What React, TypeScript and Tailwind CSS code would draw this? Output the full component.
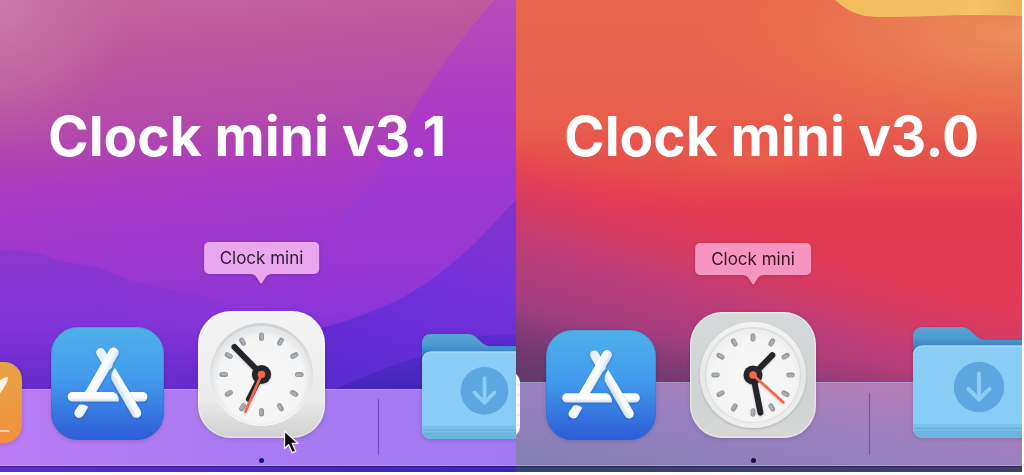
import React from 'react';

interface IconProps {
  id: string;
  className?: string;
}

interface Point {
  x: number;
  y: number;
}

interface ClockIconProps extends IconProps {
  variant: 'recessed' | 'ringed';
  hour: Point;
  minute: Point;
  second: Point;
}

const TICKS = [0, 30, 60, 90, 120, 150, 180, 210, 240, 270, 300, 330];

const MontereyWallpaper: React.FC = () => (
  <svg className="absolute inset-0 -z-10 w-full h-full" viewBox="0 0 516 472" preserveAspectRatio="none" aria-hidden="true">
    <defs>
      <linearGradient id="mon-base" x1="0" y1="0" x2="0.1" y2="1">
        <stop offset="0" stopColor="#c5649c" />
        <stop offset="0.16" stopColor="#bc559f" />
        <stop offset="0.3" stopColor="#b249ab" />
        <stop offset="0.4" stopColor="#ab3bc0" />
        <stop offset="0.48" stopColor="#a438cb" />
        <stop offset="0.6" stopColor="#9b38d1" />
        <stop offset="0.72" stopColor="#8635d8" />
        <stop offset="0.82" stopColor="#6c2dd0" />
        <stop offset="1" stopColor="#4b27b8" />
      </linearGradient>
      <linearGradient id="mon-ridge" x1="0" y1="0" x2="0" y2="1">
        <stop offset="0" stopColor="#b84cb9" />
        <stop offset="0.3" stopColor="#ac39c5" />
        <stop offset="0.5" stopColor="#9d38d2" />
        <stop offset="0.68" stopColor="#9638d6" stopOpacity="0.5" />
        <stop offset="0.85" stopColor="#9536d5" stopOpacity="0" />
      </linearGradient>
      <linearGradient id="mon-left" x1="0" y1="0" x2="0" y2="1">
        <stop offset="0" stopColor="#8d38cf" />
        <stop offset="0.35" stopColor="#8033d8" />
        <stop offset="0.6" stopColor="#682ccb" />
        <stop offset="1" stopColor="#5c29b8" />
      </linearGradient>
      <linearGradient id="mon-left-fade" x1="0" y1="0" x2="1" y2="0">
        <stop offset="0" stopColor="#fff" />
        <stop offset="0.3" stopColor="#fff" />
        <stop offset="0.85" stopColor="#000" />
      </linearGradient>
      <linearGradient id="mon-right" x1="0.9" y1="0" x2="0.5" y2="1">
        <stop offset="0" stopColor="#8333cd" />
        <stop offset="0.45" stopColor="#7431da" />
        <stop offset="1" stopColor="#5a2bd0" />
      </linearGradient>
      <linearGradient id="mon-low" x1="0" y1="0" x2="0" y2="1">
        <stop offset="0" stopColor="#5b2cd2" />
        <stop offset="1" stopColor="#4427b8" />
      </linearGradient>
      <radialGradient id="mon-corner">
        <stop offset="0" stopColor="#c87aaa" />
        <stop offset="1" stopColor="#c6709f" stopOpacity="0" />
      </radialGradient>
      <mask id="mon-mask">
        <rect width="330" height="472" fill="url(#mon-left-fade)" />
      </mask>
    </defs>
    <rect width="516" height="472" fill="url(#mon-base)" />
    <ellipse cx="0" cy="0" rx="130" ry="150" fill="url(#mon-corner)" />
    <path d="M494 0C462 38 430 80 411 114C388 156 350 205 320 260C300 300 280 350 250 400H516V0Z" fill="url(#mon-ridge)" />
    <path d="M0 250C22 248 38 252 60 261C80 265 95 264 112 273C135 284 160 288 200 295C240 305 290 340 330 389V472H0Z" fill="url(#mon-left)" mask="url(#mon-mask)" />
    <path d="M516 200C500 216 490 228 476 242C440 276 410 296 380 308C355 319 335 324 315 330L270 389H516Z" fill="url(#mon-right)" />
    <path d="M516 335C480 334 450 338 424 355C395 364 365 376 335 389H516Z" fill="url(#mon-low)" />
  </svg>
);

const BigSurWallpaper: React.FC = () => (
  <svg className="absolute inset-0 -z-10 w-full h-full" viewBox="0 0 506 472" preserveAspectRatio="none" aria-hidden="true">
    <defs>
      <linearGradient id="sur-base" x1="0" y1="0" x2="0" y2="1">
        <stop offset="0" stopColor="#e9664e" />
        <stop offset="0.24" stopColor="#e8604d" />
        <stop offset="0.34" stopColor="#e6504c" />
        <stop offset="0.45" stopColor="#e53a50" />
        <stop offset="0.65" stopColor="#e23a54" />
        <stop offset="1" stopColor="#d0395c" />
      </linearGradient>
      <linearGradient id="sur-plum" gradientUnits="userSpaceOnUse" x1="0" y1="145" x2="-64" y2="370">
        <stop offset="0" stopColor="#e43b56" stopOpacity="0" />
        <stop offset="0.14" stopColor="#dc3c5e" stopOpacity="0.7" />
        <stop offset="0.38" stopColor="#c13d76" />
        <stop offset="0.62" stopColor="#a43d80" />
        <stop offset="0.85" stopColor="#7f3a75" />
        <stop offset="1" stopColor="#673a6a" />
      </linearGradient>
      <linearGradient id="sur-dusk" gradientUnits="userSpaceOnUse" x1="0" y1="310" x2="-12" y2="390">
        <stop offset="0" stopColor="#5a3a68" stopOpacity="0" />
        <stop offset="1" stopColor="#5a3868" stopOpacity="0.75" />
      </linearGradient>
      <radialGradient id="sur-glow">
        <stop offset="0" stopColor="#eb905a" />
        <stop offset="1" stopColor="#ea7850" stopOpacity="0" />
      </radialGradient>
      <radialGradient id="sur-warm">
        <stop offset="0" stopColor="#e9604d" stopOpacity="0.85" />
        <stop offset="1" stopColor="#e8524c" stopOpacity="0" />
      </radialGradient>
      <linearGradient id="sur-gold" x1="0" y1="0" x2="1" y2="0">
        <stop offset="0.6" stopColor="#f1bd5e" />
        <stop offset="0.75" stopColor="#f3c466" />
        <stop offset="1" stopColor="#eeb154" />
      </linearGradient>
    </defs>
    <rect width="506" height="472" fill="url(#sur-base)" />
    <rect width="506" height="472" fill="url(#sur-plum)" />
    <rect width="506" height="472" fill="url(#sur-dusk)" />
    <ellipse cx="240" cy="155" rx="150" ry="42" fill="url(#sur-warm)" />
    <ellipse cx="506" cy="35" rx="330" ry="110" fill="url(#sur-glow)" />
    <path d="M319 0C332 11 342 17 365 17C410 17 455 13 506 16V0Z" fill="url(#sur-gold)" />
  </svg>
);

const AppStoreIcon: React.FC<IconProps> = ({ id, className }) => (
  <svg className={className} viewBox="0 0 113 113" aria-hidden="true">
    <defs>
      <linearGradient id={`${id}-bg`} x1="0" y1="0" x2="0" y2="1">
        <stop offset="0" stopColor="#4fb0ea" />
        <stop offset="0.45" stopColor="#429bec" />
        <stop offset="1" stopColor="#2d5dd7" />
      </linearGradient>
      <linearGradient id={`${id}-bar`} gradientUnits="userSpaceOnUse" x1="0" y1="65" x2="0" y2="75">
        <stop offset="0" stopColor="#fff" />
        <stop offset="0.6" stopColor="#f8fafd" />
        <stop offset="1" stopColor="#ccd9ec" />
      </linearGradient>
      <linearGradient id={`${id}-a`} gradientUnits="userSpaceOnUse" x1="46" y1="43" x2="56" y2="48">
        <stop offset="0" stopColor="#fff" />
        <stop offset="0.6" stopColor="#f8fafd" />
        <stop offset="1" stopColor="#d6e3f2" />
      </linearGradient>
      <linearGradient id={`${id}-b`} gradientUnits="userSpaceOnUse" x1="80" y1="63" x2="71" y2="68">
        <stop offset="0" stopColor="#fff" />
        <stop offset="0.6" stopColor="#f8fafd" />
        <stop offset="1" stopColor="#d8e5f4" />
      </linearGradient>
      <filter id={`${id}-sh`} x="-20%" y="-20%" width="140%" height="140%">
        <feDropShadow dx="0" dy="1" stdDeviation="1.3" floodColor="#123a8c" floodOpacity="0.4" />
      </filter>
    </defs>
    <rect width="113" height="113" rx="27" fill={`url(#${id}-bg)`} />
    <rect x="0.5" y="0.5" width="112" height="112" rx="26.5" fill="none" stroke="#2b62b4" strokeOpacity="0.25" />
    <g filter={`url(#${id}-sh)`}>
      <path d="M49.7 25.5L57 38" stroke="#e9f2fb" strokeWidth="9" strokeLinecap="round" />
      <path d="M64 41L68.6 48.5L89.5 83.5A4.8 4.8 0 0 1 81.2 88.5L61 53.5C59.2 49.5 61 44.5 64 41Z" fill={`url(#${id}-b)`} />
      <path d="M58.4 23A4.9 4.9 0 0 1 67 28L45 65.6H33.8Z" fill={`url(#${id}-a)`} />
      <path d="M21.5 64.9H62.5C66 66.5 68.2 70 67.7 74.6H21.5A4.8 4.8 0 0 1 21.5 64.9Z" fill={`url(#${id}-bar)`} />
      <path d="M78.4 64.9H91.5A4.8 4.8 0 0 1 91.5 74.6H84.2Z" fill={`url(#${id}-bar)`} />
      <path d="M28.2 77.8C31.5 76.8 35 77.7 37.2 80L32.2 88.6A4.8 4.8 0 0 1 23.9 83.8Z" fill="#f1f5fa" />
    </g>
  </svg>
);

const ClockIcon: React.FC<ClockIconProps> = ({ id, className, variant, hour, minute, second }) => (
  <svg className={className} viewBox="0 0 127 127" aria-hidden="true">
    <defs>
      <linearGradient id={`${id}-body`} x1="0" y1="0" x2="0" y2="1">
        <stop offset="0" stopColor={variant === 'recessed' ? '#f4f4f4' : '#d6d9d9'} />
        <stop offset="0.7" stopColor={variant === 'recessed' ? '#ebebeb' : '#d0d3d3'} />
        <stop offset="1" stopColor={variant === 'recessed' ? '#cfcfd1' : '#d7d8d8'} />
      </linearGradient>
      <linearGradient id={`${id}-rim`} x1="0" y1="0" x2="0" y2="1">
        <stop offset="0" stopColor={variant === 'recessed' ? '#cfd2d5' : '#f3f3f3'} />
        <stop offset="0.5" stopColor={variant === 'recessed' ? '#e1e2e3' : '#e7e8e8'} />
        <stop offset="1" stopColor={variant === 'recessed' ? '#fbfbfb' : '#efefef'} />
      </linearGradient>
      <radialGradient id={`${id}-face`} cx="0.5" cy="0.54" r="0.5">
        <stop offset="0" stopColor="#f8f8f8" />
        <stop offset="0.86" stopColor="#f5f5f5" />
        <stop offset="1" stopColor={variant === 'recessed' ? '#e4e6e8' : '#efefef'} />
      </radialGradient>
      <filter id={`${id}-soft`} x="-20%" y="-20%" width="140%" height="140%">
        <feDropShadow dx="0" dy="1" stdDeviation="1.2" floodColor="#000" floodOpacity="0.2" />
      </filter>
    </defs>
    <rect width="127" height="127" rx="33" fill={`url(#${id}-body)`} />
    <rect x="0.7" y="0.7" width="125.6" height="125.6" rx="32.3" fill="none" stroke="#fff" strokeOpacity="0.4" strokeWidth="1.4" />
    {variant === 'recessed' ? (
      <>
        <circle cx="63.5" cy="63.5" r="51.5" fill={`url(#${id}-rim)`} />
        <circle cx="63.5" cy="64.5" r="49.5" fill={`url(#${id}-face)`} />
      </>
    ) : (
      <>
        <circle cx="63.5" cy="63.5" r="53.5" fill={`url(#${id}-rim)`} filter={`url(#${id}-soft)`} />
        <circle cx="63.5" cy="63.5" r="48.5" fill="#dcdddd" />
        <circle cx="63.5" cy="64" r="47.2" fill={`url(#${id}-face)`} />
      </>
    )}
    {TICKS.map((angle) => (
      <g key={angle} transform={`rotate(${angle} 63.5 63.5)`}>
        <rect x="61" y="21.4" width="5" height="8.6" rx="2.5" fill="#8f989f" />
        <rect x="62.6" y="22.8" width="2.6" height="6.4" rx="1.3" fill="#a9b1b7" />
      </g>
    ))}
    <g filter={`url(#${id}-soft)`} strokeLinecap="round">
      <path d={`M63.5 63.5L${hour.x} ${hour.y}`} stroke="#25272b" strokeWidth="6" />
      <path d={`M63.5 63.5L${minute.x} ${minute.y}`} stroke="#25272b" strokeWidth="6" />
      <circle cx="63.5" cy="63.5" r="9.6" fill="#25272b" />
      <path d={`M63.5 63.5L${second.x} ${second.y}`} stroke="#f3684a" strokeWidth="2.8" />
      <circle cx="63.5" cy="63.5" r="3.8" fill="#f3684a" />
    </g>
  </svg>
);

const DownloadsIcon: React.FC<IconProps> = ({ id, className }) => (
  <svg className={className} viewBox="0 0 132 111" aria-hidden="true">
    <defs>
      <linearGradient id={`${id}-back`} gradientUnits="userSpaceOnUse" x1="0" y1="0" x2="0" y2="22">
        <stop offset="0" stopColor="#58a3d2" />
        <stop offset="0.5" stopColor="#4d9bd0" />
        <stop offset="1" stopColor="#3579bf" />
      </linearGradient>
      <linearGradient id={`${id}-front`} x1="0" y1="0" x2="0" y2="1">
        <stop offset="0" stopColor="#8bcdf6" />
        <stop offset="0.85" stopColor="#87cdf6" />
        <stop offset="1" stopColor="#82c7ef" />
      </linearGradient>
    </defs>
    <path d="M0 30V10C0 3 4 0 10 0H47C53 0 56 2 60 6C64 10 67 13 74 13H122C128 13 132 17 132 23V60H0Z" fill={`url(#${id}-back)`} />
    <rect y="18.5" width="132" height="92.5" rx="10" fill={`url(#${id}-front)`} />
    <path d="M0 97H132V101C132 107 128 111 122 111H10C4 111 0 107 0 101Z" fill="#7ac2eb" />
    <path d="M1 101.5H131" stroke="#66b0dc" strokeWidth="1.4" />
    <path d="M1 104H131C130 108 127 111 122 111H10C5 111 2 108 1 104Z" fill="#6cb5e1" />
    <path d="M0.8 29C0.8 22 4 19.2 10 19.2H122C128 19.2 131.2 22 131.2 29" fill="none" stroke="#a4dcfa" strokeWidth="1.2" />
    <circle cx="66" cy="60" r="25.2" fill="#5ca7e0" />
    <path d="M66 46.5V72M55.5 62L66 72.5L76.5 62" fill="none" stroke="#8acdf6" strokeWidth="4" strokeLinecap="round" strokeLinejoin="round" />
  </svg>
);

const PagesIcon: React.FC<IconProps> = ({ id, className }) => (
  <svg className={className} viewBox="0 0 81 81" aria-hidden="true">
    <defs>
      <linearGradient id={`${id}-bg`} x1="0" y1="0" x2="0" y2="1">
        <stop offset="0" stopColor="#e6a544" />
        <stop offset="1" stopColor="#f18f40" />
      </linearGradient>
    </defs>
    <rect width="81" height="81" rx="18" fill={`url(#${id}-bg)`} />
    <path d="M66 15C63 15 48 25 38 38L50 42C57 35 65 24 67 17C67 16 67 15 66 15Z" fill="#f7f3ea" />
    <path d="M20 69H68" stroke="#fbd3a3" strokeWidth="2" strokeLinecap="round" />
  </svg>
);

const DocumentIcon: React.FC<{ className?: string }> = ({ className }) => (
  <svg className={className} viewBox="0 0 65 65" aria-hidden="true">
    <rect width="65" height="65" rx="10" fill="#fdfbf8" />
    <path d="M0 13H65M0 23H65M0 33H65M0 43H65M0 53H65" stroke="#eadfd2" />
  </svg>
);

const Pointer: React.FC = () => (
  <svg className="absolute left-[85px] top-[118px] w-[17px] h-[26px]" viewBox="0 0 17 26" aria-hidden="true">
    <path d="M1.5 2V19.5L5.6 15.8L9.2 23.8L12.8 22.2L9.3 14.4H15.2Z" fill="#111" stroke="#f4f0f4" strokeWidth="1.3" strokeLinejoin="round" />
  </svg>
);

interface TooltipProps {
  text: string;
  boxClass: string;
  arrowClass: string;
}

const Tooltip: React.FC<TooltipProps> = ({ text, boxClass, arrowClass }) => (
  <div role="tooltip" className="absolute bottom-full left-1/2 -translate-x-1/2 mb-[27px] flex flex-col items-center drop-shadow-sm">
    <span className={`rounded-[5px] px-4 py-1 text-[17px] leading-6 whitespace-nowrap ${boxClass}`}>{text}</span>
    <svg className={`w-5 h-2.5 ${arrowClass}`} viewBox="0 0 20 10" fill="currentColor" aria-hidden="true">
      <path d="M0 0H20C17 0.3 16 1.5 14.5 3.2L11 8.8C10.4 9.6 9.6 9.6 9 8.8L5.5 3.2C4 1.5 3 0.3 0 0Z" />
    </svg>
  </div>
);

interface PanelProps {
  title: string;
  wallpaper: React.ReactNode;
  dockClass: string;
  stripClass: string;
  children: React.ReactNode;
}

const Panel: React.FC<PanelProps> = ({ title, wallpaper, dockClass, stripClass, children }) => (
  <section className="relative isolate flex flex-col justify-between min-w-0 overflow-hidden">
    {wallpaper}
    <h2 className="pt-[100px] pl-12 text-[55px] leading-[72px] font-bold text-white whitespace-nowrap">
      {title}
    </h2>
    <footer>
      <div className={`flex items-end border-t border-b border-white/20 ${dockClass}`}>{children}</div>
      <div className={`h-[6px] border-t border-black/30 ${stripClass}`} />
    </footer>
  </section>
);

const App: React.FC = () => {
  return (
    <main className="grid grid-cols-[516fr_506fr] min-h-screen bg-white pr-[2px] pb-[3px] font-['Inter',sans-serif]">
      <Panel
        title="Clock mini v3.1"
        wallpaper={<MontereyWallpaper />}
        dockClass="h-[77px] bg-linear-to-r from-[#b97bf3] via-[#a87bf2] to-[#a079f0]"
        stripClass="bg-linear-to-r from-[#5c2cc8] to-[#3c24b6]"
      >
        <button type="button" aria-label="Pages" className="shrink-0 -ml-[59px] mr-[29px] mb-[22px] drop-shadow-sm">
          <PagesIcon id="pages" className="block w-[81px]" />
        </button>
        <button type="button" aria-label="App Store" className="shrink-0 mr-[34px] mb-[25px] drop-shadow-sm">
          <AppStoreIcon id="store-a" className="block w-[113px]" />
        </button>
        <div className="relative shrink-0 flex flex-col items-center mr-[53px] pb-[2px]">
          <Tooltip text="Clock mini" boxClass="bg-[#e9a7ef] text-[#2e1733]" arrowClass="text-[#e9a7ef]" />
          <button type="button" aria-label="Clock mini" className="drop-shadow-sm mb-5">
            <ClockIcon
              id="clock-a"
              className="block w-[127px]"
              variant="recessed"
              hour={{ x: 51, y: 88 }}
              minute={{ x: 36.5, y: 36 }}
              second={{ x: 47.5, y: 100.5 }}
            />
          </button>
          <span className="w-[5px] h-[5px] rounded-full bg-[#1c1180]" />
          <Pointer />
        </div>
        <div className="shrink-0 w-px h-14 mr-[43px] mb-[10px] bg-[#7543bd]" />
        <button type="button" aria-label="Downloads" className="shrink-0 mb-[26px] drop-shadow-sm">
          <DownloadsIcon id="folder-a" className="block w-[125px]" />
        </button>
      </Panel>

      <Panel
        title="Clock mini v3.0"
        wallpaper={<BigSurWallpaper />}
        dockClass="h-[84px] bg-linear-to-tr from-[#8380b5] via-[#9a80c0] to-[#bd7ab2]"
        stripClass="bg-linear-to-r from-[#36446c] to-[#413e6c]"
      >
        <button type="button" aria-label="Document" className="shrink-0 -ml-[61px] mr-[26px] mb-[28px]">
          <DocumentIcon className="block w-[65px]" />
        </button>
        <button type="button" aria-label="App Store" className="shrink-0 mr-[34px] mb-[25px] drop-shadow-sm">
          <AppStoreIcon id="store-b" className="block w-[110px]" />
        </button>
        <div className="relative shrink-0 flex flex-col items-center mr-[53px] pb-[2px]">
          <Tooltip text="Clock mini" boxClass="bg-[#f695bf] text-[#3a1423]" arrowClass="text-[#f695bf]" />
          <button type="button" aria-label="Clock mini" className="drop-shadow-sm mb-5">
            <ClockIcon
              id="clock-b"
              className="block w-[126px]"
              variant="ringed"
              hour={{ x: 83, y: 43.5 }}
              minute={{ x: 71, y: 101.5 }}
              second={{ x: 94, y: 91 }}
            />
          </button>
          <span className="w-[5px] h-[5px] rounded-full bg-[#1c1045]" />
        </div>
        <div className="shrink-0 w-px h-[62px] mr-[43px] mb-[10px] bg-[#79508f]" />
        <button type="button" aria-label="Downloads" className="shrink-0 mb-[27px] drop-shadow-sm">
          <DownloadsIcon id="folder-b" className="block w-[132px]" />
        </button>
      </Panel>
    </main>
  );
};

export default App;
